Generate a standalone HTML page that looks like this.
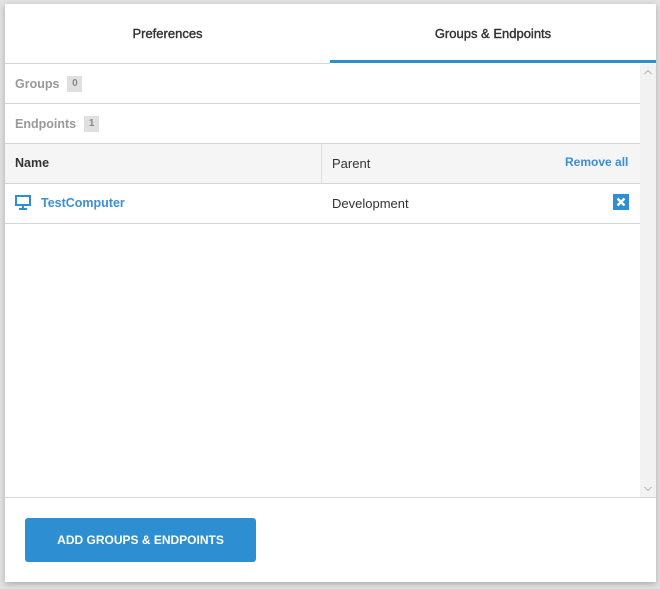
<!DOCTYPE html>
<html><head><style>
*{margin:0;padding:0;box-sizing:border-box}
body{width:660px;height:589px;background:#e2e2e2;font-family:"Liberation Sans",sans-serif;position:relative;overflow:hidden}
.panel{position:absolute;left:5px;top:4px;width:651px;height:578px;background:#fff;box-shadow:0 2px 6px rgba(0,0,0,.25)}
.tab{position:absolute;top:0;height:60px;line-height:60px;text-align:center;font-size:13px;color:#333}
.abs{position:absolute}
.line{position:absolute;height:1px;background:#d6d6d6}
.lbl{position:absolute;height:39px;display:flex;align-items:center;font-size:12.5px;color:#999;font-weight:bold}
.badge{display:inline-block;background:#e0e0e0;color:#888;font-size:10px;width:15px;height:16px;line-height:16px;text-align:center;margin-left:8px}
</style></head><body>
<div class="panel">
 <div class="tab" style="left:0;width:325px;-webkit-text-stroke:.4px #333">Preferences</div>
 <div class="tab" style="left:325px;width:326px;-webkit-text-stroke:.4px #333">Groups &amp; Endpoints</div>
 <div class="abs" style="left:325px;top:56px;width:326px;height:3px;background:#2d8fd2"></div>
 <div class="line" style="left:0;top:59px;width:325px"></div>
 <div class="abs" style="left:635px;top:60px;width:16px;height:433px;background:#f2f2f2"></div>
 <svg class="abs" style="left:638px;top:64px" width="10" height="8"><path d="M1.5 6L5 2.5L8.5 6" fill="none" stroke="#bbb" stroke-width="1.2"/></svg>
 <svg class="abs" style="left:638px;top:481px" width="10" height="8"><path d="M1.5 2L5 5.5L8.5 2" fill="none" stroke="#bbb" stroke-width="1.2"/></svg>
 <div class="lbl" style="left:10px;top:60px">Groups<span class="badge">0</span></div>
 <div class="line" style="left:0;top:99px;width:635px"></div>
 <div class="lbl" style="left:10px;top:100px">Endpoints<span class="badge">1</span></div>
 <div class="line" style="left:0;top:139px;width:635px"></div>
 <div class="abs" style="left:0;top:140px;width:635px;height:39px;background:#f5f5f5"></div>
 <div class="abs" style="left:316px;top:140px;width:1px;height:39px;background:#ddd"></div>
 <div class="abs" style="left:10px;top:152px;font-size:12.5px;color:#333;font-weight:bold">Name</div>
 <div class="abs" style="left:327px;top:152px;font-size:13px;color:#333">Parent</div>
 <div class="abs" style="left:560px;top:151px;font-size:12px;color:#3a8fd6;font-weight:bold">Remove all</div>
 <div class="line" style="left:0;top:179px;width:635px"></div>
 <svg class="abs" style="left:10px;top:191px" width="16" height="15" viewBox="0 0 16 15"><rect x="1" y="1" width="14" height="9" fill="none" stroke="#2d8fd2" stroke-width="2"/><rect x="7" y="10" width="2" height="3" fill="#2d8fd2"/><rect x="4" y="13" width="8" height="2" fill="#2d8fd2"/></svg>
 <div class="abs" style="left:36px;top:192px;font-size:12.5px;color:#3a8fd6;font-weight:bold">TestComputer</div>
 <div class="abs" style="left:327px;top:192px;font-size:13px;color:#333">Development</div>
 <svg class="abs" style="left:608px;top:190px" width="16" height="16"><rect width="16" height="16" fill="#2d8fd2"/><path d="M4.5 4.5L11.5 11.5M11.5 4.5L4.5 11.5" stroke="#fff" stroke-width="2.4"/></svg>
 <div class="line" style="left:0;top:219px;width:635px"></div>
 <div class="line" style="left:0;top:493px;width:651px"></div>
 <div class="abs" style="left:20px;top:514px;width:231px;height:44px;background:#2d8fd2;border-radius:3px;color:#fff;font-size:12px;font-weight:bold;text-align:center;line-height:44px">ADD GROUPS &amp; ENDPOINTS</div>
</div>
</body></html>
